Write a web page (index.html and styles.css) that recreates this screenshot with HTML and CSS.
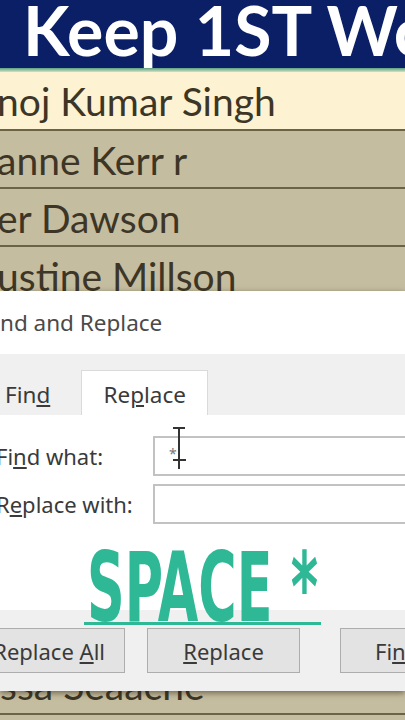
FILE: index.html
```html
<html>

<head>
    <link rel="stylesheet" href="styles.css">
</head>

<body>
    <div class="sheet">
        <div class="banner"><span class="bannerText">Keep 1ST Word</span></div>
        <div class="rule"></div>
        <div class="row first"><span class="cell">noj Kumar Singh</span></div>
        <div class="row"><span class="cell">anne Kerr r</span></div>
        <div class="row"><span class="cell">er Dawson</span></div>
        <div class="row cut"><span class="cell">ustine Millson</span></div>

        <div class="dialog">
            <div class="dlgTitle">nd and Replace</div>
            <div class="tabs">
                <div class="tab">Fin<u>d</u></div>
                <div class="tab active">Re<u>p</u>lace</div>
            </div>
            <div class="fields">
                <div class="field">
                    <span class="label">Fi<u>n</u>d what:</span>
                    <div class="box">
                        <span class="typed">*</span>
                        <svg class="ibeam" width="16" height="44" viewBox="0 0 16 44">
                            <path d="M1 2h12M7 2v41M1 34h13" stroke="#333" stroke-width="2" fill="none"/>
                        </svg>
                    </div>
                </div>
                <div class="field">
                    <span class="label">R<u>e</u>place with:</span>
                    <div class="box"></div>
                </div>
            </div>
            <div class="caption">SPACE *</div>
            <div class="buttons">
                <div class="button wide">Replace <u>A</u>ll</div>
                <div class="button"><u>R</u>eplace</div>
                <div class="button next">Fi<u>n</u>d Next</div>
            </div>
        </div>

        <div class="row last"><span class="cell">ssa Seaacne</span></div>
    </div>
</body>

</html>
```

FILE: styles.css
```css
body {
    margin: 0;
    overflow: hidden;
}

.sheet {
    width: 405px;
    height: 720px;
    overflow: hidden;
    background: #c5bda0;
}

/* spreadsheet part */

.banner {
    height: 68px;
    background-color: #0b1f66;
    white-space: nowrap;
    overflow: hidden;
}

.bannerText {
    display: block;
    padding-left: 23px;
    font-family: Lato, "Liberation Sans", sans-serif;
    font-weight: bold;
    font-size: 68px;
    line-height: 60px;
    color: #ffffff;
}

.rule {
    height: 4px;
    background: linear-gradient(#5e9f7e, #cfe3c9);
}

.row {
    height: 56px;
    border-bottom: 2px solid #6b6347;
    background-color: #c5bda0;
    white-space: nowrap;
    overflow: hidden;
}

.row.first {
    height: 57px;
    background-color: #fdf3d2;
}

.row.cut {
    height: 44px;
    border-bottom: 0;
}

.cell {
    display: block;
    margin-left: -3px;
    font-family: Lato, "Liberation Sans", sans-serif;
    font-size: 39px;
    line-height: 58px;
    color: #3d3626;
}

.row.last {
    height: 22px;
    border-bottom: 2px solid #6b6347;
}

.row.last .cell {
    margin-top: -35px;
    margin-left: 0;
}

/* dialog */

.dialog {
    position: relative;
    z-index: 1;
    height: 400px;
    background-color: #ffffff;
    box-shadow: 0 2px 6px rgba(40, 30, 10, 0.55);
    font-family: "Noto Sans", "Open Sans", sans-serif;
    color: #3a3a3a;
}

.dlgTitle {
    height: 63px;
    line-height: 64px;
    font-size: 22.5px;
    color: #4a4a4a;
    white-space: nowrap;
}

.tabs {
    height: 61px;
    background-color: #f0f0f0;
    display: flex;
    align-items: flex-end;
    font-size: 22.5px;
}

.tab {
    height: 44px;
    line-height: 48px;
    padding: 0 24px 0 5px;
}

.tab.active {
    width: 125px;
    padding: 0;
    margin-left: 7px;
    text-align: center;
    background-color: #ffffff;
    border: 1px solid #dadada;
    border-bottom: 0;
}

.fields {
    padding-top: 21px;
    height: 174px;
}

.field {
    display: flex;
    align-items: center;
    height: 40px;
    margin-bottom: 8px;
}

.label {
    width: 157px;
    margin-left: -4px;
    font-size: 22px;
    white-space: nowrap;
}

.box {
    position: relative;
    flex: 1;
    height: 36px;
    margin-right: -20px;
    border: 2px solid #c2c2c2;
}

.typed {
    position: absolute;
    left: 14px;
    top: 6px;
    font-size: 14px;
    color: #777;
}

.ibeam {
    position: absolute;
    left: 17px;
    top: -12px;
}

.caption {
    position: absolute;
    left: 84px;
    top: 263px;
    font-family: "DejaVu Sans", sans-serif;
    font-stretch: condensed;
    font-weight: bold;
    font-size: 97px;
    line-height: 68px;
    color: #2fb896;
    white-space: nowrap;
    transform: scaleX(0.6);
    transform-origin: left top;
    border-bottom: 3px solid #2fb896;
    padding: 0 5px;
}

.buttons {
    height: 81px;
    background-color: #f0f0f0;
    display: flex;
    align-items: center;
    gap: 22px;
    white-space: nowrap;
}

.button {
    flex-shrink: 0;
    width: 151px;
    height: 43px;
    line-height: 44px;
    text-align: center;
    font-size: 22px;
    background-color: #e3e3e3;
    border: 1px solid #adadad;
}

.button.wide {
    width: 126px;
    margin-left: -22px;
    text-align: right;
    padding-right: 19px;
}

.button.next {
    width: 120px;
    margin-left: 18px;
    text-align: left;
    padding-left: 34px;
}
```
